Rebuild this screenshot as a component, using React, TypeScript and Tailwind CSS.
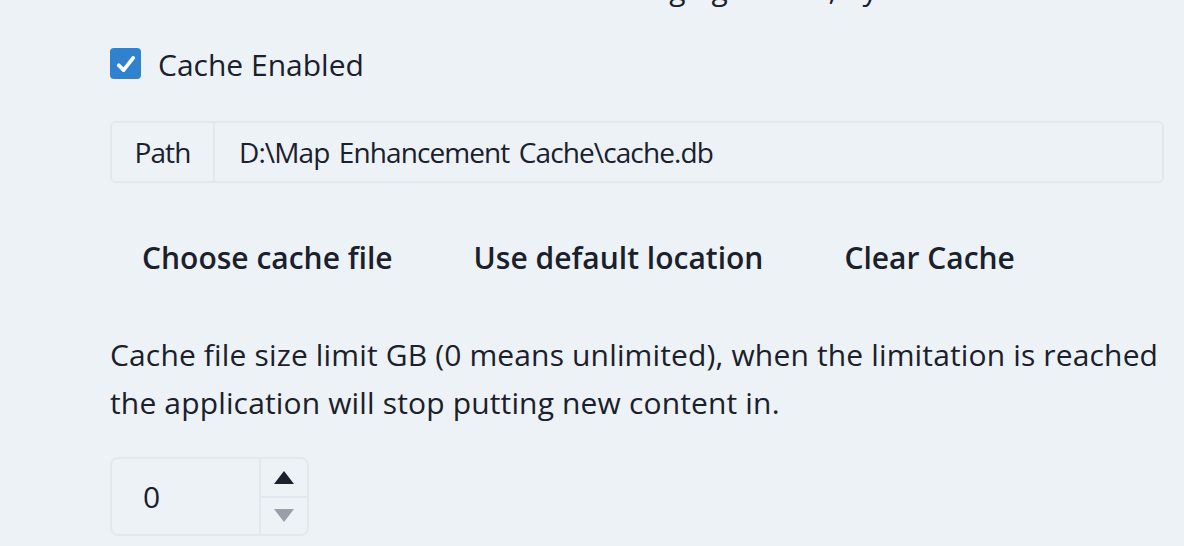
import { useState } from "react";

function CheckIcon() {
  return (
    <svg viewBox="0 0 12 10" className="h-[16px] w-[20px]" fill="none">
      <polyline
        points="1.5 5.8 4.5 8.8 10.5 1.2"
        stroke="white"
        strokeWidth="2.3"
        strokeLinecap="round"
        strokeLinejoin="round"
      />
    </svg>
  );
}

function Triangle({ up, color }: { up: boolean; color: string }) {
  return (
    <svg viewBox="0 0 20 13" className="h-[13px] w-[20px]">
      <polygon points={up ? "10 0 20 13 0 13" : "0 0 20 0 10 13"} fill={color} />
    </svg>
  );
}

export default function App() {
  const [enabled, setEnabled] = useState(true);
  const [limit, setLimit] = useState(0);

  return (
    <div
      className="h-[546px] w-full overflow-hidden bg-[#edf2f7] text-[30px] leading-[48px] text-[#1a202c]"
      style={{ fontFamily: '"Open Sans", "Noto Sans", sans-serif' }}
    >
      <div className="-mt-[35px] pl-[110px] pr-[20px]">
        <p className="h-[48px] whitespace-nowrap">
          Remember to restart the tool after changing its size, by
        </p>

        <label className="mt-[28px] flex h-[48px] cursor-pointer items-center">
          <button
            type="button"
            onClick={() => setEnabled(!enabled)}
            className={`-mt-[3px] flex h-[31px] w-[31px] items-center justify-center rounded-[4px] ${
              enabled ? "bg-[#3182ce]" : "border-2 border-[#e2e8f0]"
            }`}
          >
            {enabled && <CheckIcon />}
          </button>
          <span className="ml-[17px]">Cache Enabled</span>
        </label>

        <div className="mt-[32px] flex h-[62px] rounded-[6px] border-2 border-[#e2e8f0] text-[28px] tracking-[-0.9px] [word-spacing:3px]">
          <div className="flex w-[103px] items-center justify-center border-r-2 border-[#e2e8f0]">
            Path
          </div>
          <div className="flex flex-1 items-center pl-6">D:\Map Enhancement Cache\cache.db</div>
        </div>

        <div className="mt-[44px] flex h-[62px] gap-[17px]">
          <button type="button" className="px-8 font-semibold">
            Choose cache file
          </button>
          <button type="button" className="px-8 font-semibold">
            Use default location
          </button>
          <button type="button" className="px-8 font-semibold">
            Clear Cache
          </button>
        </div>

        <p className="mt-[42px] tracking-[0.15px]">
          Cache file size limit GB (0 means unlimited), when the limitation is reached the
          application will stop putting new content in.
        </p>

        <div className="mt-[30px] flex h-[79px] w-[199px] rounded-[8px] border-2 border-[#e2e8f0]">
          <div className="flex flex-1 items-center pl-[31px]">{limit}</div>
          <div className="flex w-[48px] flex-col border-l-2 border-[#e2e8f0]">
            <button
              type="button"
              onClick={() => setLimit(limit + 1)}
              className="flex flex-1 items-center justify-center border-b-2 border-[#e2e8f0]"
            >
              <Triangle up color="#1a202c" />
            </button>
            <button
              type="button"
              onClick={() => setLimit(Math.max(0, limit - 1))}
              className="flex flex-1 items-center justify-center"
            >
              <Triangle up={false} color={limit > 0 ? "#1a202c" : "#9a9ea6"} />
            </button>
          </div>
        </div>
      </div>
    </div>
  );
}
